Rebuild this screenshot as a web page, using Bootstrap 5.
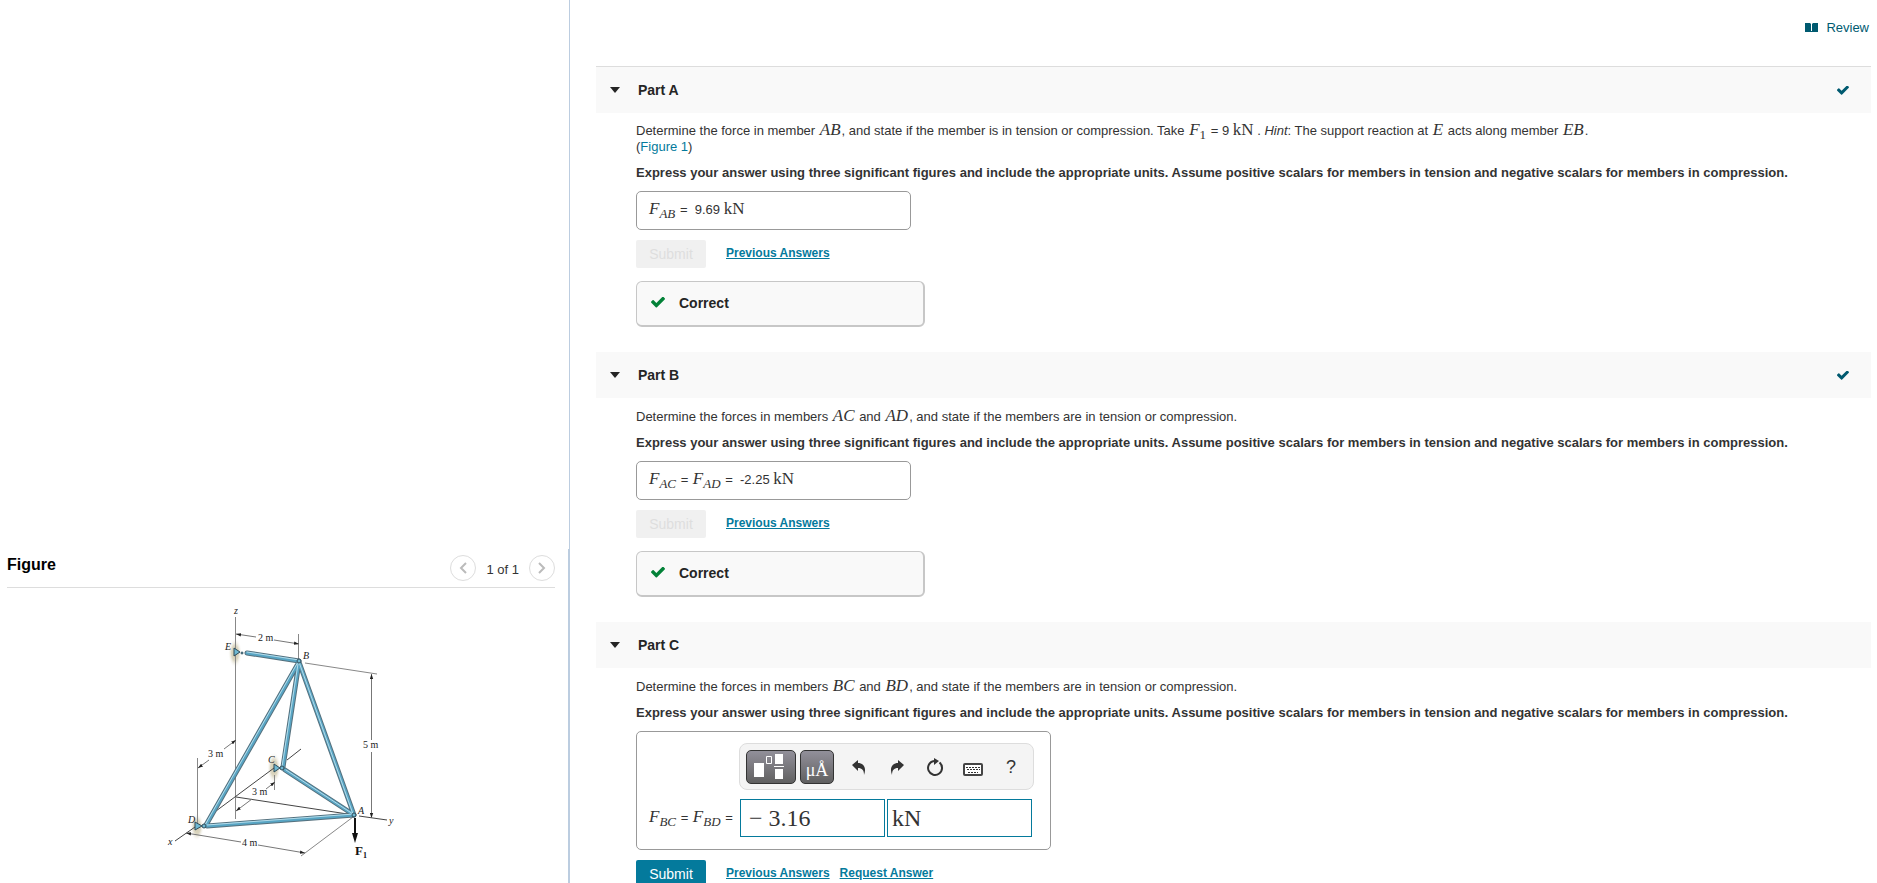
<!DOCTYPE html>
<html lang="en">
<head>
<meta charset="utf-8">
<meta name="viewport" content="width=device-width, initial-scale=1">
<title>Space truss problem</title>
<link rel="stylesheet" href="https://cdn.jsdelivr.net/npm/bootstrap@5.3.0/dist/css/bootstrap.min.css">
<script src="https://cdn.jsdelivr.net/npm/bootstrap@5.3.0/dist/js/bootstrap.bundle.min.js"></script>
<style>
body{font-family:"Liberation Sans",Arial,sans-serif;font-size:13px;line-height:16px;color:#333;background:#fff}
a{color:#047a9c}
.workspace{height:100vh;overflow:hidden}
.figure-pane{flex:0 0 570px;border-right:1px solid #bccde0}
.figure-block{height:334px;border-right:2px solid #bccde0;margin-right:-1px;padding:0 13px 0 7px}
.figure-head{height:39px;border-bottom:1px solid #ddd;padding-top:6px}
.figure-head h2{font-size:16px;line-height:20px;color:#000}
.truss{margin-top:12px}
.pager{gap:10px}
.pager span{padding-top:7px}
.round-btn{width:26px;height:26px;border:1px solid #ddd;border-radius:50%;background:#fff}
.problem-pane{min-width:0;padding:0 6px 0 26px}
.review-bar{height:66px;padding:18px 2px 0 0;line-height:20px}
.review-bar a{color:#005a70}
.part-head{height:46px;background:#f9f9f9;padding:0 22px 0 13px}
.part-first{height:47px;border-top:1px solid #ddd}
.part-head h2{font-size:14px;line-height:20px;color:#252525;margin:0 0 0 17px}
.caret-btn{width:12px;height:20px}
.part-body{padding:11px 0 25px 40px}
.part-first + .part-body{padding-top:10px}
.part-body p{margin:0 0 10px}
.m{font-family:"Liberation Serif",serif;font-size:17px;line-height:0;margin:0 1px}
.m sub{font-size:13px;bottom:-4px;line-height:0}
.unit{font-family:"Liberation Serif",serif;font-size:17px;line-height:0}
.answer-box{width:275px;height:39px;border:1px solid #999;border-radius:5px;padding:0 11px 2px}
.btn-answer{width:70px;height:28px;border-radius:2px;font-size:14px;line-height:20px}
.btn-answer:disabled{background:#f0f0f0;color:#dedede;opacity:1;border:0}
.btn-go,.btn-go:hover{background:#047a9c;color:#fff}
.links{margin-top:10px;gap:10px}
.links a{font-size:12px;line-height:16px;font-weight:700;margin-top:5px}
.links .btn{margin-right:10px}
.result-box{width:289px;height:46px;margin-top:13px;gap:14px;background:#f9f9f9;border:1px solid #c7c7c7;border-width:1px 2px 2px 1px;border-radius:6px;padding:0 14px 2px;font-size:14px;color:#252525}
.editor-box{width:415px;height:119px;border:1px solid #999;border-radius:5px;padding:11px 16px 12px 11px}
.tool-bar{width:295px;height:47px;background:#f4f4f4;border:1px solid #ddd;border-radius:8px;padding-left:6px}
.dark-btn{height:34px;border:1px solid #333;border-radius:5px;background:linear-gradient(#92909a,#606060);color:#fff}
.tool-btn{flex:0 0 38px;height:30px;color:#333}
.tool-undo{margin-left:6px}
.tool-help{font-size:18px;line-height:30px}
.value-row{gap:2px;padding-right:2px}
.value-in{width:145px;height:38px;border:1px solid #047a9c;border-radius:0;font-family:"Liberation Serif",serif;font-size:24px;color:#333}
svg text{font-family:"Liberation Serif",serif}
</style>
</head>
<body>
<svg width="0" height="0" class="position-absolute" aria-hidden="true"><symbol id="check" viewBox="120 420 1552 1110"><path d="M1671 566q0 40-28 68l-724 724-136 136q-28 28-68 28t-68-28l-136-136-362-362q-28-28-28-68t28-68l136-136q28-28 68-28t68 28l294 295 656-657q28-28 68-28t68 28l136 136q28 28 28 68z"/></symbol></svg>
<div class="workspace d-flex">
  <aside class="figure-pane d-flex flex-column justify-content-end">
    <section class="figure-block">
      <div class="figure-head d-flex justify-content-between">
        <h2 class="fw-bold m-0">Figure</h2>
        <div class="pager d-flex align-items-start">
          <button class="round-btn p-0 d-flex align-items-center justify-content-center" type="button" aria-label="Previous figure"><svg width="8" height="12" fill="none" stroke="#bbb" stroke-width="2"><path d="M7 1L2 6l5 5"/></svg></button>
          <span>1 of 1</span>
          <button class="round-btn p-0 d-flex align-items-center justify-content-center" type="button" aria-label="Next figure"><svg width="8" height="12" fill="none" stroke="#bbb" stroke-width="2"><path d="M1 1l5 5-5 5"/></svg></button>
        </div>
      </div>
      <svg class="truss d-block mx-auto" width="260" height="270" viewBox="151 600 260 270" role="img" aria-label="Space truss diagram">
        <defs>
          <marker id="arr" viewBox="0 0 6 4" refX="6" refY="2" markerWidth="5" markerHeight="4" markerUnits="userSpaceOnUse" orient="auto-start-reverse"><path d="M0 0L6 2L0 4Z" fill="#222"/></marker>
          <radialGradient id="halo"><stop offset="0" stop-color="#cfc8ab"/><stop offset=".5" stop-color="#dcd7c2"/><stop offset="1" stop-color="#fff" stop-opacity="0"/></radialGradient>
        </defs>
        <g fill="url(#halo)"><ellipse cx="235" cy="653" rx="7" ry="15"/><ellipse cx="274" cy="768" rx="7" ry="16"/><ellipse cx="197" cy="827" rx="7" ry="14"/></g>
        <g stroke="#888" stroke-width="1" fill="none">
          <path d="M235.500 617V819M298.500 634V660M305 663L377 674M197.500 758V825M274.500 775V790M353 817L301 856"/>
          <path stroke="#444" d="M175 841L195 827M216 811L274 768M287 760L301 749M236 797L354 815M359 816L387 820"/>
        </g>
        <g stroke="#777" stroke-width="1" fill="none">
          <path marker-start="url(#arr)" d="M236 634L256 637"/><path marker-end="url(#arr)" d="M274 640L299 644"/>
          <path marker-start="url(#arr)" d="M371.500 674V740"/><path marker-end="url(#arr)" d="M371.500 752V818"/>
          <path marker-end="url(#arr)" d="M224 749L236 740"/><path marker-start="url(#arr)" d="M198 768L209 760"/>
          <path marker-end="url(#arr)" d="M266 789L275 782"/><path marker-start="url(#arr)" d="M236 811L252 799"/>
          <path marker-start="url(#arr)" d="M186 833L241 842"/><path marker-end="url(#arr)" d="M258 845L305 853"/>
        </g>
        <g stroke-linecap="round">
          <g stroke="#55707d" stroke-width="5"><path d="M247 653L299 661M299 662L283 767M285 770L354 815M299 662L354 815M299 662L206 825M207 826L354 815"/></g>
          <g stroke="#58a5c4" stroke-width="3"><path d="M247 653L299 661M299 662L283 767M285 770L354 815M299 662L354 815M299 662L206 825M207 826L354 815"/></g>
          <g stroke="#b5dcea" stroke-width="1"><path d="M247 652L299 660M298 664L282 767M286 770L353 814M299 662L353 814M298 662L205 825M207 825L354 814"/></g>
        </g>
        <g fill="#6fb8d2" stroke="#2f4b58" stroke-width="1">
          <path d="M234 648L240 652L234 656ZM274 764L280 768L274 772ZM195 822L202 826L195 830Z"/>
          <circle cx="242" cy="653" r="1"/><circle cx="282" cy="768" r="2"/><circle cx="204" cy="826" r="2"/><circle cx="299" cy="661" r="2"/><circle cx="354" cy="815" r="2"/>
        </g>
        <path d="M355 818V835" stroke="#111" stroke-width="2"/><path d="M352 833H358L355 843Z" fill="#111"/>
        <g font-size="10" fill="#222">
          <text x="258" y="641">2 m</text><text x="208" y="757">3 m</text><text x="252" y="795">3 m</text><text x="363" y="748">5 m</text><text x="242" y="846">4 m</text>
          <g font-style="italic"><text x="234" y="614">z</text><text x="225" y="650">E</text><text x="303" y="659">B</text><text x="268" y="763">C</text><text x="188" y="823">D</text><text x="358" y="814">A</text><text x="389" y="824">y</text><text x="168" y="845">x</text></g>
        </g>
        <text x="355" y="855" font-size="13" font-weight="bold" fill="#111">F<tspan font-size="8" dy="3">1</tspan></text>
      </svg>
    </section>
  </aside>

  <main class="problem-pane flex-grow-1">
    <div class="review-bar d-flex justify-content-end">
      <a href="#" class="text-decoration-none d-flex align-items-start gap-2"><svg class="mt-1" width="13" height="11" fill="#005a70"><path d="M0 1H5L6 2V10L5 9H0ZM13 1H8L7 2V10L8 9H13Z"/><path d="M0 9H13V10H0Z"/></svg>Review</a>
    </div>
    <section>
      <header class="part-head part-first d-flex align-items-center">
        <button class="caret-btn btn p-0 border-0 d-flex align-items-center" type="button" aria-label="Collapse Part A"><svg width="12" height="6"><path d="M1 0H11L6 6Z" fill="#252525"/></svg></button>
        <h2 class="fw-bold flex-grow-1">Part A</h2>
        <svg width="12" height="9" fill="#005a70"><use href="#check"/></svg>
      </header>
      <div class="part-body">
        <p>Determine the force in member <span class="m"><i>AB</i></span>, and state if the member is in tension or compression. Take <span class="m"><i>F</i><sub>1</sub></span> = 9 <span class="unit">kN</span> . <i>Hint</i>: The support reaction at <span class="m"><i>E</i></span> acts along member <span class="m"><i>EB</i></span>.<br>(<a href="#" class="text-decoration-none">Figure 1</a>)</p>
        <p class="fw-bold">Express your answer using three significant figures and include the appropriate units. Assume positive scalars for members in tension and negative scalars for members in compression.</p>
        <div class="answer-box d-flex align-items-center"><span><span class="m"><i>F</i><sub><i>AB</i></sub></span> = &nbsp;9.69 <span class="unit">kN</span></span></div>
        <div class="links d-flex align-items-start"><button class="btn btn-answer p-0" disabled type="button">Submit</button><a href="#">Previous Answers</a></div>
        <div class="result-box fw-bold d-flex align-items-center"><svg width="14" height="11" fill="#038238"><use href="#check"/></svg><span>Correct</span></div>
      </div>
    </section>
    <section>
      <header class="part-head d-flex align-items-center">
        <button class="caret-btn btn p-0 border-0 d-flex align-items-center" type="button" aria-label="Collapse Part B"><svg width="12" height="6"><path d="M1 0H11L6 6Z" fill="#252525"/></svg></button>
        <h2 class="fw-bold flex-grow-1">Part B</h2>
        <svg width="12" height="9" fill="#005a70"><use href="#check"/></svg>
      </header>
      <div class="part-body">
        <p>Determine the forces in members <span class="m"><i>AC</i></span> and <span class="m"><i>AD</i></span>, and state if the members are in tension or compression.</p>
        <p class="fw-bold">Express your answer using three significant figures and include the appropriate units. Assume positive scalars for members in tension and negative scalars for members in compression.</p>
        <div class="answer-box d-flex align-items-center"><span><span class="m"><i>F</i><sub><i>AC</i></sub></span> = <span class="m"><i>F</i><sub><i>AD</i></sub></span> = &nbsp;-2.25 <span class="unit">kN</span></span></div>
        <div class="links d-flex align-items-start"><button class="btn btn-answer p-0" disabled type="button">Submit</button><a href="#">Previous Answers</a></div>
        <div class="result-box fw-bold d-flex align-items-center"><svg width="14" height="11" fill="#038238"><use href="#check"/></svg><span>Correct</span></div>
      </div>
    </section>
    <section>
      <header class="part-head d-flex align-items-center">
        <button class="caret-btn btn p-0 border-0 d-flex align-items-center" type="button" aria-label="Collapse Part C"><svg width="12" height="6"><path d="M1 0H11L6 6Z" fill="#252525"/></svg></button>
        <h2 class="fw-bold flex-grow-1">Part C</h2>
      </header>
      <div class="part-body">
        <p>Determine the forces in members <span class="m"><i>BC</i></span> and <span class="m"><i>BD</i></span>, and state if the members are in tension or compression.</p>
        <p class="fw-bold">Express your answer using three significant figures and include the appropriate units. Assume positive scalars for members in tension and negative scalars for members in compression.</p>
        <div class="editor-box d-flex flex-column justify-content-between align-items-end">
          <div class="tool-bar d-flex align-items-center">
            <button class="dark-btn p-0 me-1 d-flex" type="button" aria-label="Templates"><svg width="48" height="32"><path d="M7 12H17V26H7ZM28 3H36V13H28ZM28 18H36V28H28ZM27 15H37V16H27Z" fill="#fff"/><path d="M19.500 5.500H24.500V12.500H19.500Z" fill="none" stroke="#fff"/></svg></button>
            <button class="dark-btn p-0 d-flex" type="button" aria-label="Units"><svg width="32" height="32"><text x="16" y="25" font-size="18" text-anchor="middle" fill="#fff">μÅ</text></svg></button>
            <button class="tool-btn tool-undo btn p-0 border-0" type="button" aria-label="Undo"><svg width="14" height="15" fill="#333"><path d="M0 5L6 0V3C11 3 15 7 12 15C12 10 10 8 6 8V11Z"/></svg></button>
            <button class="tool-btn btn p-0 border-0" type="button" aria-label="Redo"><svg width="14" height="15" fill="#333"><path d="M14 5L8 0V3C3 3 -1 7 2 15C2 10 4 8 8 8V11Z"/></svg></button>
            <button class="tool-btn btn p-0 border-0" type="button" aria-label="Reset"><svg width="18" height="18"><path d="M13.500 4.500A7 7 0 1 1 8 3" fill="none" stroke="#333" stroke-width="2"/><path d="M8 0L13 3L8 7Z" fill="#333"/></svg></button>
            <button class="tool-btn btn p-0 border-0 pt-1" type="button" aria-label="Keyboard"><svg width="20" height="13"><rect x="1" y="1" width="18" height="11" rx="1" fill="#fff" stroke="#444" stroke-width="2"/><path d="M3 4.500H17M4 6.500H17M5 9.500H15" stroke="#333" stroke-dasharray="2 1"/></svg></button>
            <button class="tool-btn tool-help btn p-0 border-0" type="button" aria-label="Help">?</button>
          </div>
          <div class="value-row d-flex align-items-center w-100">
            <label class="me-auto" for="val"><span class="m"><i>F</i><sub><i>BC</i></sub></span> = <span class="m"><i>F</i><sub><i>BD</i></sub></span> =</label>
            <input id="val" class="value-in px-2" value="− 3.16"><input class="value-in px-1" aria-label="Units" value="kN">
          </div>
        </div>
        <div class="links d-flex align-items-start"><button class="btn btn-answer btn-go p-0" type="button">Submit</button><a href="#">Previous Answers</a><a href="#">Request Answer</a></div>
      </div>
    </section>
  </main>
</div>
</body>
</html>
